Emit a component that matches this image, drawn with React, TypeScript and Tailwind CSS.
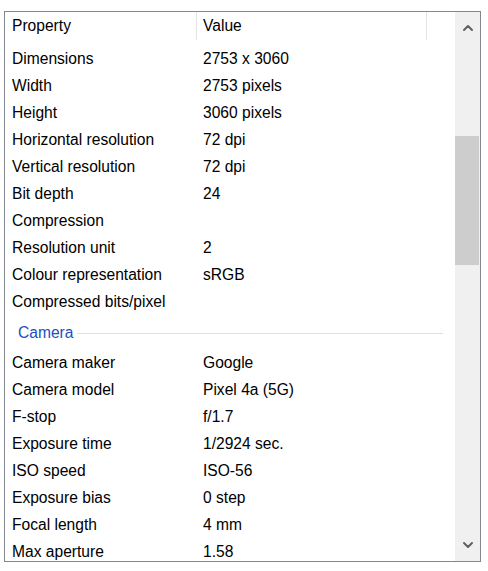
import { ChevronUp, ChevronDown } from 'lucide-react';

type Row = { name: string; value?: string };

const imageRows: Row[] = [
  { name: 'Image ID' },
  { name: 'Dimensions', value: '2753 x 3060' },
  { name: 'Width', value: '2753 pixels' },
  { name: 'Height', value: '3060 pixels' },
  { name: 'Horizontal resolution', value: '72 dpi' },
  { name: 'Vertical resolution', value: '72 dpi' },
  { name: 'Bit depth', value: '24' },
  { name: 'Compression' },
  { name: 'Resolution unit', value: '2' },
  { name: 'Colour representation', value: 'sRGB' },
  { name: 'Compressed bits/pixel' },
];

const cameraRows: Row[] = [
  { name: 'Camera maker', value: 'Google' },
  { name: 'Camera model', value: 'Pixel 4a (5G)' },
  { name: 'F-stop', value: 'f/1.7' },
  { name: 'Exposure time', value: '1/2924 sec.' },
  { name: 'ISO speed', value: 'ISO-56' },
  { name: 'Exposure bias', value: '0 step' },
  { name: 'Focal length', value: '4 mm' },
  { name: 'Max aperture', value: '1.58' },
];

function PropRow({ row }: { row: Row }) {
  return (
    <div className="flex h-[27px] items-center">
      <div className="w-[191px] shrink-0 pl-[7px]">{row.name}</div>
      <div className="pl-[7px]">{row.value}</div>
    </div>
  );
}

export default function App() {
  return (
    <div
      className="h-[571px] w-[488px] bg-white pl-[4px] pt-[11px] text-[15.6px] text-black"
      style={{ fontFamily: '"Liberation Sans", Arial, sans-serif' }}
    >
      <div className="flex h-[551px] w-[477px] border border-[#828790]">
        {/* List */}
        <div className="flex min-w-0 flex-1 flex-col overflow-hidden">
          {/* Header */}
          <div className="relative z-10 flex h-[28px] shrink-0 items-center bg-white">
            <div className="flex h-full w-[192px] items-center border-r border-[#e5e5e5] pl-[7px]">Property</div>
            <div className="flex h-full w-[230px] items-center border-r border-[#e5e5e5] pl-[6px]">Value</div>
          </div>

          <div className="-mt-[22px]">
            {imageRows.map((r) => (
              <PropRow key={r.name} row={r} />
            ))}

            {/* Group header */}
            <div className="flex h-[34px] items-center pl-[13px] pr-[12px] pt-[2px]">
              <span className="text-[#1c4fbf]">Camera</span>
              <div className="ml-[4px] h-px flex-1 bg-[#d6e0f0]" />
            </div>

            {cameraRows.map((r) => (
              <PropRow key={r.name} row={r} />
            ))}
          </div>
        </div>

        {/* Scrollbar */}
        <div className="flex w-[25px] shrink-0 flex-col bg-[#f0f0f0]">
          <div className="flex h-[32px] items-center justify-center text-[#606060]">
            <ChevronUp size={16} strokeWidth={3} />
          </div>
          <div className="mt-[92px] h-[129px] w-[24px] bg-[#cdcdcd]" />
          <div className="flex-1" />
          <div className="flex h-[32px] items-center justify-center text-[#606060]">
            <ChevronDown size={16} strokeWidth={3} />
          </div>
        </div>
      </div>
    </div>
  );
}
